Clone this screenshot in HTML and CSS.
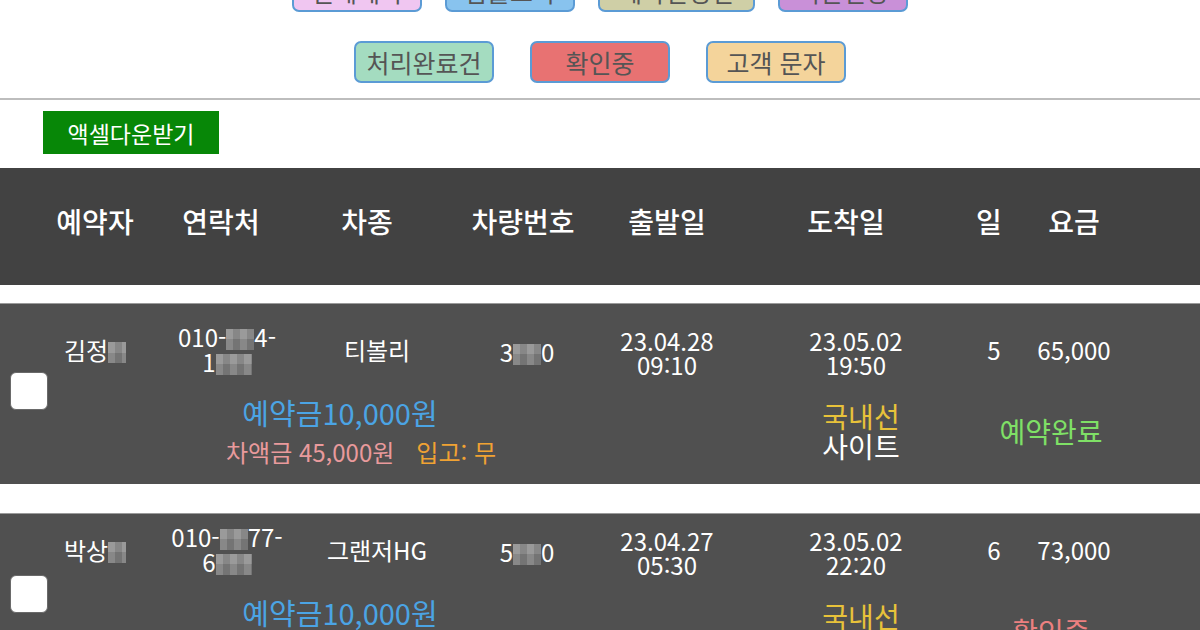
FILE: index.html
```html
<!DOCTYPE html>
<html lang="ko">
<head>
<meta charset="utf-8">
<title>예약 목록</title>
<link rel="stylesheet" href="styles.css">
</head>
<body>
<div class="top">
  <div class="btn-row row-a">
    <span class="tbtn pink w130">전체예약</span>
    <span class="tbtn sky w130">입출고차</span>
    <span class="tbtn khaki w157">예약변경건</span>
    <span class="tbtn violet w130">기간연장</span>
  </div>
  <div class="btn-row row-b">
    <span class="tbtn mint w140">처리완료건</span>
    <span class="tbtn red w140">확인중</span>
    <span class="tbtn sand w140">고객 문자</span>
  </div>
</div>

<div class="main">
  <div class="tools"><span class="excel">액셀다운받기</span></div>

  <div class="thead">
    <span></span>
    <span class="h">예약자</span>
    <span class="h">연락처</span>
    <span class="h">차종</span>
    <span class="h">차량번호</span>
    <span class="h">출발일</span>
    <span class="h">도착일</span>
    <span class="h">일</span>
    <span class="h">요금</span>
  </div>

  <div class="rec">
    <span class="chk"></span>
    <div class="c">김정<span class="mz mz-s"></span></div>
    <div class="c">010-<span class="mz mz-m"></span>4-<br>1<span class="mz mz-l"></span></div>
    <div class="c">티볼리</div>
    <div class="c low">3<span class="mz mz-m"></span>0</div>
    <div class="c low">23.04.28<br>09:10</div>
    <div class="c low">23.05.02<br>19:50</div>
    <div class="c">5</div>
    <div class="c">65,000</div>
    <div class="deposit">
      <div class="dep-main">예약금10,000원</div>
      <div class="dep-sub"><span class="pinktxt">차액금 45,000원</span><span class="orangetxt">입고: 무</span></div>
    </div>
    <div class="route"><span class="yellowtxt">국내선</span><br>사이트</div>
    <div class="status done">예약완료</div>
  </div>

  <div class="rec rec2">
    <span class="chk"></span>
    <div class="c">박상<span class="mz mz-s"></span></div>
    <div class="c">010-<span class="mz mz-m"></span>77-<br>6<span class="mz mz-l"></span></div>
    <div class="c">그랜저HG</div>
    <div class="c low">5<span class="mz mz-m"></span>0</div>
    <div class="c low">23.04.27<br>05:30</div>
    <div class="c low">23.05.02<br>22:20</div>
    <div class="c">6</div>
    <div class="c">73,000</div>
    <div class="deposit">
      <div class="dep-main">예약금10,000원</div>
      <div class="dep-sub"><span class="pinktxt">차액금 63,000원</span><span class="orangetxt">입고: 무</span></div>
    </div>
    <div class="route"><span class="yellowtxt">국내선</span><br>사이트</div>
    <div class="status check">확인중</div>
  </div>
</div>
</body>
</html>
```

FILE: styles.css
```css
* { box-sizing: border-box; }

html, body {
  margin: 0;
  overflow: hidden;
  background: #ffffff;
  font-family: "Noto Sans CJK KR", "Noto Sans", sans-serif;
}

.btn-row {
  display: flex;
  justify-content: center;
}

.row-a { gap: 23px; margin-top: -30px; }
.row-b { gap: 36px; margin-top: 29px; }

.tbtn {
  height: 42px;
  border: 2px solid #5b9bd5;
  border-radius: 7px;
  display: flex;
  align-items: center;
  justify-content: center;
  font-size: 25px;
  color: #555555;
  white-space: nowrap;
}

.w130 { width: 130px; }
.w140 { width: 140px; }
.w157 { width: 157px; }

.pink { background: #f0c6f1; }
.sky { background: #88c3ee; }
.khaki { background: #cfcfa6; }
.violet { background: #c990d8; }
.mint { background: #a4dcc0; }
.red { background: #e87272; }
.sand { background: #f4d49b; }

.main {
  margin-top: 15px;
  border-top: 2px solid #bdbdbd;
  padding-top: 11px;
}

.tools {
  display: flex;
  padding-left: 43px;
}

.excel {
  display: flex;
  width: 176px;
  height: 43px;
  align-items: center;
  justify-content: center;
  background: #078707;
  color: #ffffff;
  font-size: 23px;
}

.thead {
  margin-top: 14px;
  height: 117px;
  padding-bottom: 12px;
  background: #424242;
  display: grid;
  grid-template-columns: 40px 110px 142px 150px 162px 126px 232px 54px 116px;
  align-items: center;
  color: #ffffff;
  font-size: 28px;
  font-weight: 500;
}

.h { text-align: center; white-space: nowrap; }

.rec {
  margin-top: 18px;
  border-top: 1px solid #9a9a9a;
  background: #505050;
  display: grid;
  grid-template-columns: 40px 110px 154px 146px 154px 126px 252px 24px 136px;
  grid-template-rows: 54px 68px;
  row-gap: 20px;
  padding: 19px 0 19px;
  color: #ffffff;
}

.rec + .rec { margin-top: 29px; }
.rec2 { padding-top: 9px; }

.chk {
  grid-column: 1;
  grid-row: 1 / 3;
  align-self: center;
  margin: 0 0 7px 10px;
  width: 38px;
  height: 38px;
  background: #ffffff;
  border: 1px solid #6a6a6a;
  border-radius: 6px;
}

.rec2 .chk { margin-bottom: 0; }

.c {
  grid-row: 1;
  align-self: center;
  text-align: center;
  white-space: nowrap;
  font-size: 24px;
  line-height: 24px;
}

.low { padding-top: 5px; }

.mz {
  display: inline-block;
  vertical-align: -3px;
  height: 21px;
  background:
    linear-gradient(90deg, rgba(255,255,255,0.10) 50%, rgba(0,0,0,0.06) 50%) 0 0 / 14px 100%,
    linear-gradient(180deg, #8f8f8f 50%, #7b7b7b 50%) 0 0 / 100% 21px;
}

.mz-s { width: 18px; }
.mz-m { width: 28px; }
.mz-l { width: 36px; }

.deposit {
  grid-column: 3 / 6;
  grid-row: 2;
  text-align: center;
  white-space: nowrap;
}

.dep-main {
  padding-right: 74px;
  font-size: 29px;
  line-height: 30px;
  color: #4ba4e4;
}

.dep-sub {
  margin-top: 12px;
  padding-right: 32px;
  font-size: 24px;
  line-height: 26px;
}

.pinktxt { color: #e99a9c; }
.orangetxt { color: #f0a233; margin-left: 22px; }
.yellowtxt { color: #e8c23a; }

.route {
  grid-column: 7;
  grid-row: 2;
  align-self: start;
  padding: 4px 0 0 10px;
  text-align: center;
  font-size: 28px;
  line-height: 30px;
  white-space: nowrap;
}

.status {
  grid-column: 8 / 10;
  grid-row: 2;
  align-self: center;
  text-align: center;
  padding-right: 22px;
  font-size: 28px;
  white-space: nowrap;
}

.done { color: #7fe066; }
.check { color: #ec8080; }
```
